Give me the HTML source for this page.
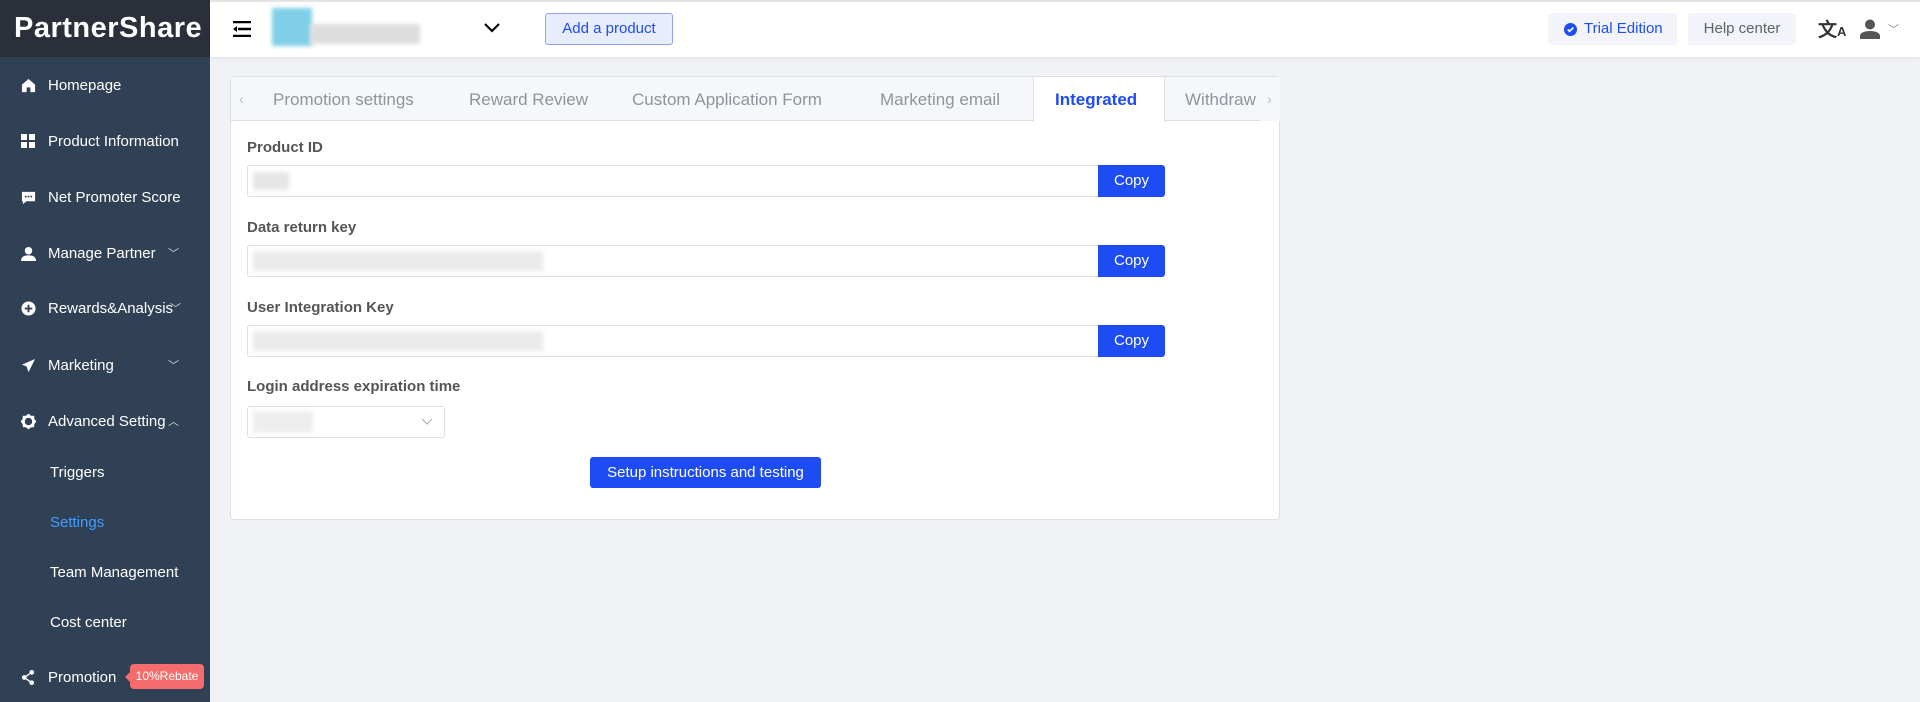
<!DOCTYPE html>
<html><head><meta charset="utf-8"><style>
*{box-sizing:border-box;margin:0;padding:0}
body{width:1920px;height:702px;overflow:hidden;background:#f0f2f5;font-family:"Liberation Sans",sans-serif;position:relative}
.side{position:absolute;left:0;top:0;width:210px;height:702px;background:#304156}
.logo{height:57px;background:#2b2f3a;color:#fff;font-size:29px;font-weight:bold;line-height:57px;padding-left:14px;letter-spacing:0.5px}
.mi{position:absolute;left:0;width:210px;color:#fff;font-size:15px;display:flex;align-items:center}
.mi svg{position:absolute;left:21px}
.mi span{position:absolute;left:48px}
.sub{position:absolute;left:50px;color:#fff;font-size:15px}
.chev{position:absolute;font-size:11px;color:#cfd5de}
.top{position:absolute;left:210px;top:0;right:0;height:57px;background:#fff;border-top:2px solid #e3e3e3;box-shadow:0 1px 4px rgba(0,0,0,.08)}
.abs{position:absolute}
.card{position:absolute;left:230px;top:76px;width:1050px;height:444px;background:#fff;border:1px solid #dcdfe6;border-radius:4px}
.tabs{position:absolute;left:0;top:0;right:0;height:44px;background:#f5f7fa;border-bottom:1px solid #dcdfe6}
.tab{position:absolute;top:13px;font-size:17px;color:#909399}
.lbl{position:absolute;left:16px;font-size:15px;font-weight:bold;color:#555}
.inp{position:absolute;left:16px;width:852px;height:32px;border:1px solid #dcdfe6;border-radius:3px 0 0 3px}
.copy{position:absolute;left:867px;width:67px;height:32px;background:#1d4cf5;color:#fff;font-size:15px;text-align:center;line-height:32px;border-radius:0 3px 3px 0}
.blur{position:absolute;background:#e6e6e6;filter:blur(2px)}
</style></head><body>
<div class="side">
<div class="logo">PartnerShare</div>
<div class="mi" style="top:75px;height:20px"><svg width="15" height="15" viewBox="0 0 16 16"><path d="M8 1L1 7v8h5v-5h4v5h5V7z" fill="#fff"/></svg><span>Homepage</span></div>
<div class="mi" style="top:131px;height:20px"><svg width="14" height="14" viewBox="0 0 14 14" fill="#fff"><rect width="6" height="6"/><rect x="8" width="6" height="6"/><rect y="8" width="6" height="6"/><rect x="8" y="8" width="6" height="6"/></svg><span>Product Information</span></div>
<div class="mi" style="top:187px;height:20px"><svg width="15" height="15" viewBox="0 0 16 16"><path d="M1 2h14v10H6l-4 3v-3H1z" fill="#fff"/><circle cx="5" cy="7" r="1" fill="#304156"/><circle cx="8" cy="7" r="1" fill="#304156"/><circle cx="11" cy="7" r="1" fill="#304156"/></svg><span>Net Promoter Score</span></div>
<div class="mi" style="top:243px;height:20px"><svg width="15" height="15" viewBox="0 0 16 16" fill="#fff"><circle cx="8" cy="5" r="4"/><path d="M0 16c0-5 4-6 8-6s8 1 8 6z"/></svg><span>Manage Partner</span><span class="chev" style="left:168px">﹀</span></div>
<div class="mi" style="top:298px;height:20px"><svg width="15" height="15" viewBox="0 0 16 16"><circle cx="8" cy="8" r="7.5" fill="#fff"/><path d="M8 4v8M4 8h8" stroke="#304156" stroke-width="2"/></svg><span>Rewards&amp;Analysis</span><span class="chev" style="left:170px">﹀</span></div>
<div class="mi" style="top:355px;height:20px"><svg width="15" height="15" viewBox="0 0 16 16"><path d="M15 1L1 7l5 2 2 6z" fill="#fff"/></svg><span>Marketing</span><span class="chev" style="left:168px">﹀</span></div>
<div class="mi" style="top:411px;height:20px"><svg width="15" height="15" viewBox="0 0 16 16"><circle cx="8" cy="8" r="5.5" fill="none" stroke="#fff" stroke-width="3"/><path d="M8 0v4M8 12v4M0 8h4M12 8h4M2.3 2.3l2.8 2.8M10.9 10.9l2.8 2.8M2.3 13.7l2.8-2.8M10.9 5.1l2.8-2.8" stroke="#fff" stroke-width="2.5"/></svg><span>Advanced Setting</span><span class="chev" style="left:168px">︿</span></div>
<div class="sub" style="top:464px">Triggers</div>
<div class="sub" style="top:514px;color:#409eff">Settings</div>
<div class="sub" style="top:564px">Team Management</div>
<div class="sub" style="top:614px">Cost center</div>
<div class="mi" style="top:667px;height:20px"><svg width="14" height="15" viewBox="0 0 14 16" fill="#fff"><circle cx="11" cy="2.5" r="2.5"/><circle cx="3" cy="8" r="2.5"/><circle cx="11" cy="13.5" r="2.5"/><path d="M11 2.5L3 8l8 5.5" stroke="#fff" stroke-width="1.5" fill="none"/></svg><span>Promotion</span></div>
<div class="abs" style="left:130px;top:664px;width:74px;height:25px;background:#f56c6c;border-radius:4px;color:#fff;font-size:12px;line-height:25px;text-align:center">10%Rebate</div>
<div class="abs" style="left:125px;top:672px;width:0;height:0;border:5px solid transparent;border-right-color:#f56c6c;border-left:0"></div>
</div>
<div class="top">
<svg class="abs" style="left:23px;top:19px" width="18" height="16" viewBox="0 0 18 16"><path d="M0 1h18M5 8h13M0 15h18" stroke="#000" stroke-width="2.5"/><path d="M0 8l4-3v6z" fill="#000"/></svg>
<div class="blur" style="left:62px;top:6px;width:40px;height:38px;background:#7fcfe8"></div>
<div class="blur" style="left:100px;top:22px;width:110px;height:20px;background:#ddd"></div>
<svg class="abs" style="left:274px;top:21px" width="16" height="10" viewBox="0 0 16 10"><path d="M1 1l7 7 7-7" stroke="#000" stroke-width="2.2" fill="none"/></svg>
<div class="abs" style="left:335px;top:11px;width:128px;height:32px;border:1px solid #8ea3f7;background:#e8edfe;border-radius:3px;color:#1d4cf5;font-size:15px;text-align:center;line-height:30px">Add a product</div>
<div class="abs" style="left:1338px;top:11px;width:129px;height:32px;background:#f2f4fa;border-radius:3px;color:#1d4cf5;font-size:15px;line-height:32px;padding-left:36px">Trial Edition</div>
<svg class="abs" style="left:1354px;top:21px" width="13" height="13" viewBox="0 0 14 14"><circle cx="7" cy="7" r="7" fill="#1d4cf5"/><path d="M4 7l2 2 4-4" stroke="#fff" stroke-width="1.8" fill="none"/></svg>
<div class="abs" style="left:1478px;top:11px;width:108px;height:32px;background:#f2f4fa;border-radius:3px;color:#606266;font-size:15px;text-align:center;line-height:32px">Help center</div>
<div class="abs" style="left:1608px;top:13px;font-size:19px;color:#333;font-weight:bold">文<span style="font-size:13px">A</span></div>
<svg class="abs" style="left:1650px;top:17px" width="20" height="20" viewBox="0 0 20 20" fill="#555"><circle cx="10" cy="5.5" r="5"/><path d="M0 20v-3c0-3 4-5 10-5s10 2 10 5v3z"/></svg>
<div class="abs" style="left:1678px;top:19px;font-size:11px;color:#888">﹀</div>
</div>
<div class="card">
<div class="tabs">
<div class="tab" style="left:8px;font-size:14px;top:14px;color:#bbb">‹</div>
<div class="tab" style="left:42px">Promotion settings</div>
<div class="tab" style="left:238px">Reward Review</div>
<div class="tab" style="left:401px">Custom Application Form</div>
<div class="tab" style="left:649px">Marketing email</div>
<div class="abs" style="left:802px;top:0;width:132px;height:45px;background:#fff;border-left:1px solid #dcdfe6;border-right:1px solid #dcdfe6"></div>
<div class="tab" style="left:824px;color:#1d4cf5;font-weight:bold">Integrated</div>
<div class="tab" style="left:954px">Withdraw</div>
<div class="abs" style="left:1030px;top:0;width:19px;height:44px;background:#f5f7fa"></div>
<div class="tab" style="left:1036px;font-size:14px;top:14px;color:#bbb">›</div>
</div>
<div class="lbl" style="top:62px">Product ID</div>
<div class="inp" style="top:88px"></div><div class="copy" style="top:88px">Copy</div>
<div class="blur" style="left:22px;top:95px;width:36px;height:18px"></div>
<div class="lbl" style="top:142px">Data return key</div>
<div class="inp" style="top:168px"></div><div class="copy" style="top:168px">Copy</div>
<div class="blur" style="left:22px;top:174px;width:290px;height:20px;background:#ebebeb"></div>
<div class="lbl" style="top:222px">User Integration Key</div>
<div class="inp" style="top:248px"></div><div class="copy" style="top:248px">Copy</div>
<div class="blur" style="left:22px;top:254px;width:290px;height:20px;background:#ebebeb"></div>
<div class="lbl" style="top:301px">Login address expiration time</div>
<div class="abs" style="left:16px;top:329px;width:198px;height:32px;border:1px solid #dcdfe6;border-radius:3px"></div>
<div class="blur" style="left:22px;top:334px;width:60px;height:22px;background:#eee"></div>
<svg class="abs" style="left:190px;top:341px" width="12" height="8" viewBox="0 0 12 8"><path d="M1 1l5 5 5-5" stroke="#aaa" fill="none"/></svg>
<div class="abs" style="left:359px;top:380px;width:231px;height:31px;background:#1d4cf5;border-radius:3px;color:#fff;font-size:15px;text-align:center;line-height:31px">Setup instructions and testing</div>
</div>
</body></html>
